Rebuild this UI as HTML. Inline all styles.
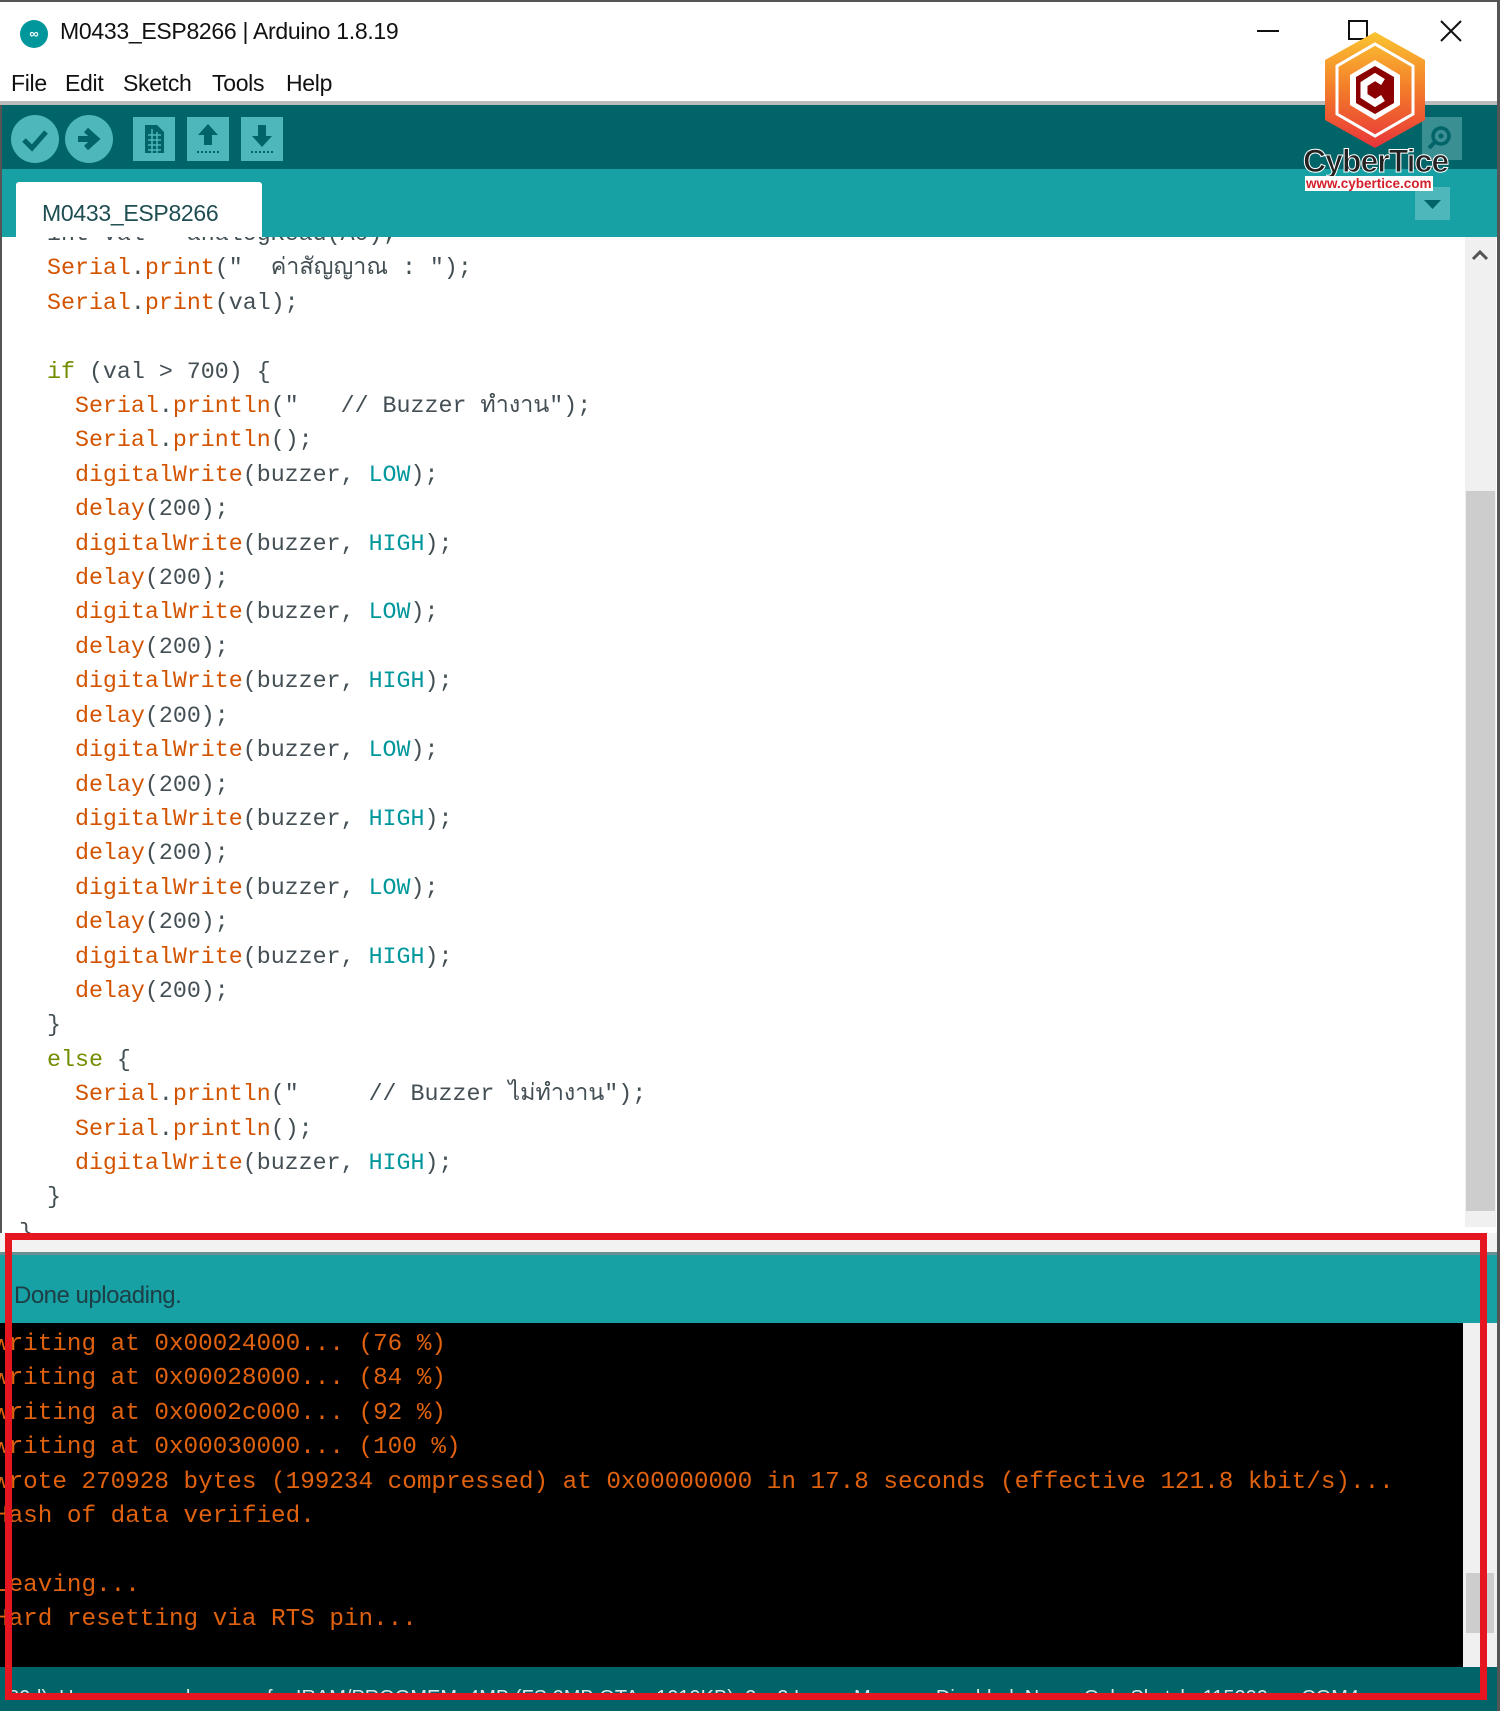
<!DOCTYPE html>
<html><head><meta charset="utf-8"><style>
*{margin:0;padding:0;box-sizing:border-box}
body{width:1500px;height:1711px;overflow:hidden;background:#fff;position:relative;font-family:"Liberation Sans",sans-serif}
.abs{position:absolute}
.mn{position:absolute;top:70px;font-size:23px;color:#111;letter-spacing:-0.3px}
#code{position:absolute;left:0;top:237px;width:1465px;height:996px;overflow:hidden;background:#fff}
#code pre{position:absolute;left:47px;top:-20px;font-family:"Liberation Mono","Noto Sans CJK SC",monospace;font-size:23.3px;line-height:34.4px;color:#434f54;white-space:pre}
.o{color:#d35400}.k{color:#728e00}.c{color:#00979c}.g{color:#434f54}
#con{position:absolute;left:0;top:1323px;width:1463px;height:344px;background:#000;overflow:hidden}
#con pre{position:absolute;left:-6px;top:5px;font-family:"Liberation Mono",monospace;font-size:24.3px;line-height:34.4px;color:#e0620f;white-space:pre}
.btnc{position:absolute;top:115px;width:48px;height:48px;border-radius:50%;background:#4db7bb}
.btns{position:absolute;top:117px;width:42px;height:44px;background:#4db7bb}
</style></head><body>
<div class="abs" style="left:0;top:0;width:1500px;height:2px;background:#555"></div>
<div class="abs" style="left:20px;top:20px;width:28px;height:28px;border-radius:50%;background:#00979c;color:#fff;font-size:13px;line-height:28px;text-align:center;font-weight:bold">∞</div>
<div class="abs" style="left:60px;top:18px;font-size:23px;color:#111;letter-spacing:-0.3px">M0433_ESP8266 | Arduino 1.8.19</div>
<div class="abs" style="left:1257px;top:30px;width:22px;height:2px;background:#111"></div>
<div class="abs" style="left:1348px;top:20px;width:20px;height:20px;border:2px solid #111"></div>
<svg class="abs" style="left:1439px;top:19px" width="24" height="24"><path d="M2 2L22 22M22 2L2 22" stroke="#111" stroke-width="2"/></svg>
<div class="mn" style="left:11px">File</div><div class="mn" style="left:65px">Edit</div><div class="mn" style="left:123px">Sketch</div><div class="mn" style="left:212px">Tools</div><div class="mn" style="left:286px">Help</div>
<div class="abs" style="left:0;top:101px;width:1500px;height:4px;background:#bbb"></div>
<div class="abs" style="left:0;top:105px;width:1500px;height:64px;background:#006468"></div>
<div class="btnc" style="left:11px"></div><div class="btnc" style="left:65px"></div>
<svg class="abs" style="left:11px;top:115px" width="48" height="48"><path d="M13 25l8 8 14-16" stroke="#006468" stroke-width="5" fill="none"/></svg>
<svg class="abs" style="left:65px;top:115px" width="48" height="48"><path d="M13 24h14M21 15l10 9-10 9" stroke="#006468" stroke-width="6" fill="none"/></svg>
<div class="btns" style="left:133px"></div><div class="btns" style="left:187px"></div><div class="btns" style="left:241px"></div>
<svg class="abs" style="left:133px;top:117px" width="42" height="44"><path d="M12 8h12l7 7v21H12z" fill="#006468"/><path d="M15 18h13M15 23h13M15 28h13M15 33h13M19 12v24M24 15v21" stroke="#4db7bb" stroke-width="1.5"/></svg>
<svg class="abs" style="left:187px;top:117px" width="42" height="44"><path d="M21 7l10 11h-6v10h-8V18h-6z" fill="#006468"/><path d="M10 35h22" stroke="#006468" stroke-width="2" stroke-dasharray="2 2"/></svg>
<svg class="abs" style="left:241px;top:117px" width="42" height="44"><path d="M21 30l10-11h-6V8h-8v11h-6z" fill="#006468"/><path d="M10 35h22" stroke="#006468" stroke-width="2" stroke-dasharray="2 2"/></svg>
<div class="abs" style="left:1422px;top:117px;width:40px;height:43px;background:#3a8f92"></div>
<svg class="abs" style="left:1422px;top:117px" width="40" height="43"><circle cx="19" cy="19" r="8" stroke="#006468" stroke-width="3.5" fill="none"/><circle cx="19" cy="19" r="2.5" fill="#006468"/><path d="M13 25l-6 6" stroke="#006468" stroke-width="4"/></svg>
<div class="abs" style="left:0;top:169px;width:1500px;height:68px;background:#17a1a5"></div>
<div class="abs" style="left:16px;top:182px;width:246px;height:56px;background:#fff;border-radius:3px 3px 0 0"></div>
<div class="abs" style="left:42px;top:200px;font-family:'Liberation Sans',sans-serif;font-size:23px;color:#1e4d52;letter-spacing:-0.3px">M0433_ESP8266</div>
<div class="abs" style="left:1415px;top:187px;width:35px;height:33px;background:#4db7bb"></div>
<svg class="abs" style="left:1415px;top:187px" width="35" height="33"><path d="M9 13h17l-8.5 9z" fill="#006468"/></svg>
<svg class="abs" style="left:1320px;top:30px" width="110" height="120"><defs><linearGradient id="lg" x1="0" y1="0" x2="0" y2="1"><stop offset="0" stop-color="#fbc531"/><stop offset="0.5" stop-color="#f37b2a"/><stop offset="1" stop-color="#e8343a"/></linearGradient></defs>
<path d="M55 2L105 30V90L55 118L5 90V30z" fill="url(#lg)"/>
<path d="M55 14L93 36V84L55 106L17 84V36z" fill="none" stroke="#fff" stroke-width="3"/>
<path d="M55 30L80 45V75L55 90L30 75V45z" fill="#fff"/>
<path d="M55 36L74 47V73L55 84L36 73V47z" fill="#8b0000"/>
<path d="M63 52L55 47L44 54V66L55 73L63 68" fill="none" stroke="#fff" stroke-width="7"/></svg>
<div class="abs" style="left:1303px;top:143px;font-size:32px;font-weight:bold;color:#222;letter-spacing:-1px;-webkit-text-stroke:1px #fff">CyberTice</div>
<div class="abs" style="left:1305px;top:176px;font-size:13.5px;font-weight:bold;color:#d21f2a;background:#fff;padding:0 1px">www.cybertice.com</div>
<div id="code"><pre><span class="g">int val = analogRead(A0);</span>
<span class="o">Serial</span>.<span class="o">print</span>("  ค่าสัญญาณ : ");
<span class="o">Serial</span>.<span class="o">print</span>(val);

<span class="k">if</span> (val &gt; 700) {
  <span class="o">Serial</span>.<span class="o">println</span>("   // Buzzer ทำงาน");
  <span class="o">Serial</span>.<span class="o">println</span>();
  <span class="o">digitalWrite</span>(buzzer, <span class="c">LOW</span>);
  <span class="o">delay</span>(200);
  <span class="o">digitalWrite</span>(buzzer, <span class="c">HIGH</span>);
  <span class="o">delay</span>(200);
  <span class="o">digitalWrite</span>(buzzer, <span class="c">LOW</span>);
  <span class="o">delay</span>(200);
  <span class="o">digitalWrite</span>(buzzer, <span class="c">HIGH</span>);
  <span class="o">delay</span>(200);
  <span class="o">digitalWrite</span>(buzzer, <span class="c">LOW</span>);
  <span class="o">delay</span>(200);
  <span class="o">digitalWrite</span>(buzzer, <span class="c">HIGH</span>);
  <span class="o">delay</span>(200);
  <span class="o">digitalWrite</span>(buzzer, <span class="c">LOW</span>);
  <span class="o">delay</span>(200);
  <span class="o">digitalWrite</span>(buzzer, <span class="c">HIGH</span>);
  <span class="o">delay</span>(200);
}
<span class="k">else</span> {
  <span class="o">Serial</span>.<span class="o">println</span>("     // Buzzer ไม่ทำงาน");
  <span class="o">Serial</span>.<span class="o">println</span>();
  <span class="o">digitalWrite</span>(buzzer, <span class="c">HIGH</span>);
}</pre><pre style="left:19px;top:979px">}</pre></div>
<div class="abs" style="left:1465px;top:237px;width:31px;height:990px;background:#f0f0f0"></div>
<div class="abs" style="left:1466px;top:491px;width:29px;height:720px;background:#cdcdcd"></div>
<svg class="abs" style="left:1470px;top:248px" width="20" height="14"><path d="M3 11l7-7 7 7" stroke="#555" stroke-width="3" fill="none"/></svg>
<div class="abs" style="left:1497px;top:0;width:3px;height:1711px;background:#555"></div>
<div class="abs" style="left:0;top:105px;width:2px;height:1606px;background:#555"></div>
<div class="abs" style="left:0;top:1233px;width:1497px;height:22px;background:#f2f2f2"></div>
<div class="abs" style="left:0;top:1252px;width:1497px;height:3px;background:#6a8f92"></div>
<div class="abs" style="left:0;top:1255px;width:1497px;height:68px;background:#17a1a5"></div>
<div class="abs" style="left:14px;top:1282px;font-size:24px;color:#1c3e44;letter-spacing:-0.5px">Done uploading.</div>
<div id="con"><pre>Writing at 0x00024000... (76 %)
Writing at 0x00028000... (84 %)
Writing at 0x0002c000... (92 %)
Writing at 0x00030000... (100 %)
Wrote 270928 bytes (199234 compressed) at 0x00000000 in 17.8 seconds (effective 121.8 kbit/s)...
Hash of data verified.

Leaving...
Hard resetting via RTS pin...</pre></div>
<div class="abs" style="left:1463px;top:1323px;width:34px;height:344px;background:#f0f0f0"></div>
<div class="abs" style="left:1466px;top:1573px;width:28px;height:60px;background:#cdcdcd"></div>
<div class="abs" style="left:0;top:1667px;width:1497px;height:44px;background:#006468;overflow:hidden"></div>
<div class="abs" style="left:8px;top:1678px;width:1450px;height:20px;overflow:hidden;font-size:20px;color:#d8e8e8;white-space:nowrap;line-height:40px">80d), Use pgm_read macros for IRAM/PROGMEM, 4MB (FS:2MB OTA:~1019KB), 2, v2 Lower Memory, Disabled, None, Only Sketch, 115200 on COM4</div>
<div class="abs" style="left:5px;top:1233px;width:1482px;height:467px;border:7px solid #e5161f"></div>
</body></html>
